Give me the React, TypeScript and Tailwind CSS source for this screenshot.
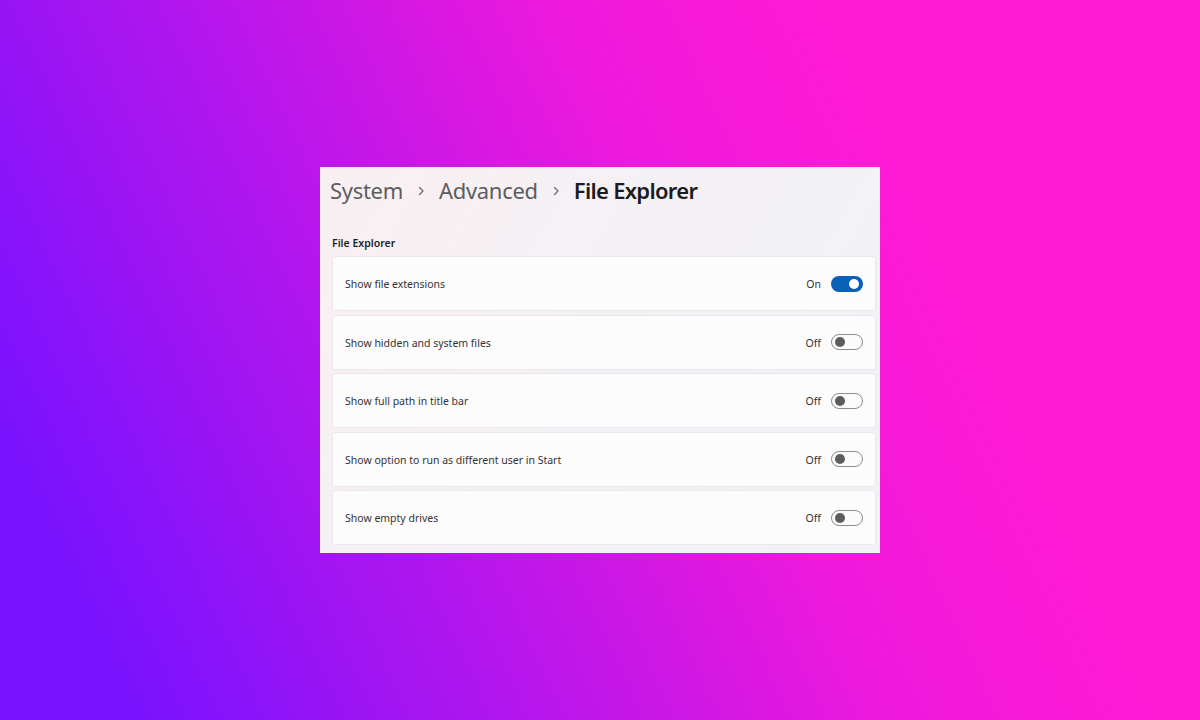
const rows = [
  { label: "Show file extensions", on: true },
  { label: "Show hidden and system files", on: false },
  { label: "Show full path in title bar", on: false },
  { label: "Show option to run as different user in Start", on: false },
  { label: "Show empty drives", on: false },
];

function Chevron() {
  return (
    <svg width="8" height="10" viewBox="0 0 8 10" className="mx-[14px] mt-[2px] text-[#6b6b6b]">
      <path d="M2.5 1.5 L6 5 L2.5 8.5" fill="none" stroke="currentColor" strokeWidth="1.3" strokeLinecap="round" strokeLinejoin="round" />
    </svg>
  );
}

function Toggle({ on }: { on: boolean }) {
  if (on) {
    return (
      <div className="flex h-[16px] w-[32px] items-center justify-end rounded-full bg-[#0a5fb8] pr-[4px]">
        <div className="h-[10px] w-[10px] rounded-full bg-white" />
      </div>
    );
  }
  return (
    <div className="flex h-[16px] w-[32px] items-center rounded-full border border-[#8c8c8c] bg-[#fbfbfb] pl-[3px]">
      <div className="h-[10px] w-[10px] rounded-full bg-[#5c5c5c]" />
    </div>
  );
}

export default function App() {
  return (
    <div className="flex h-[720px] w-[1200px] items-center justify-center bg-[linear-gradient(65deg,#7712ff_8%,#b616ec_35%,#ee19dc_58%,#ff1ad6_75%)] font-['Noto_Sans','Open_Sans',sans-serif]">
      <div className="flex h-[386px] w-[560px] flex-col bg-[linear-gradient(120deg,#f9eff2_0%,#f4f1f5_45%,#f1f2f6_100%)] pb-[6px] pl-[12px] pr-[4px]">
        <div className="-ml-[2px] flex h-[46px] items-center text-[22px] leading-none tracking-[-0.3px]">
          <span className="text-[#5d5d5d]">System</span>
          <Chevron />
          <span className="text-[#5d5d5d]">Advanced</span>
          <Chevron />
          <span className="font-semibold tracking-[-0.7px] text-[#1c1c1c]">File Explorer</span>
        </div>
        <div className="mt-[23px] mb-[5px] text-[10.5px] font-semibold leading-[15px] text-[#1f1f1f]">
          File Explorer
        </div>
        <div className="flex flex-col gap-[3.5px]">
          {rows.map((r) => (
            <div
              key={r.label}
              className="flex h-[55px] items-center justify-between rounded-[3px] border border-[#ebe7ec] bg-[#fdfcfd] pl-[12px] pr-[12px] pt-[3px]"
            >
              <span className="text-[10.5px] text-[#333333]">{r.label}</span>
              <div className="flex items-center gap-[10px]">
                <span className="text-[10.5px] text-[#333333]">{r.on ? "On" : "Off"}</span>
                <div className="-mt-[3px]">
                  <Toggle on={r.on} />
                </div>
              </div>
            </div>
          ))}
        </div>
      </div>
    </div>
  );
}
